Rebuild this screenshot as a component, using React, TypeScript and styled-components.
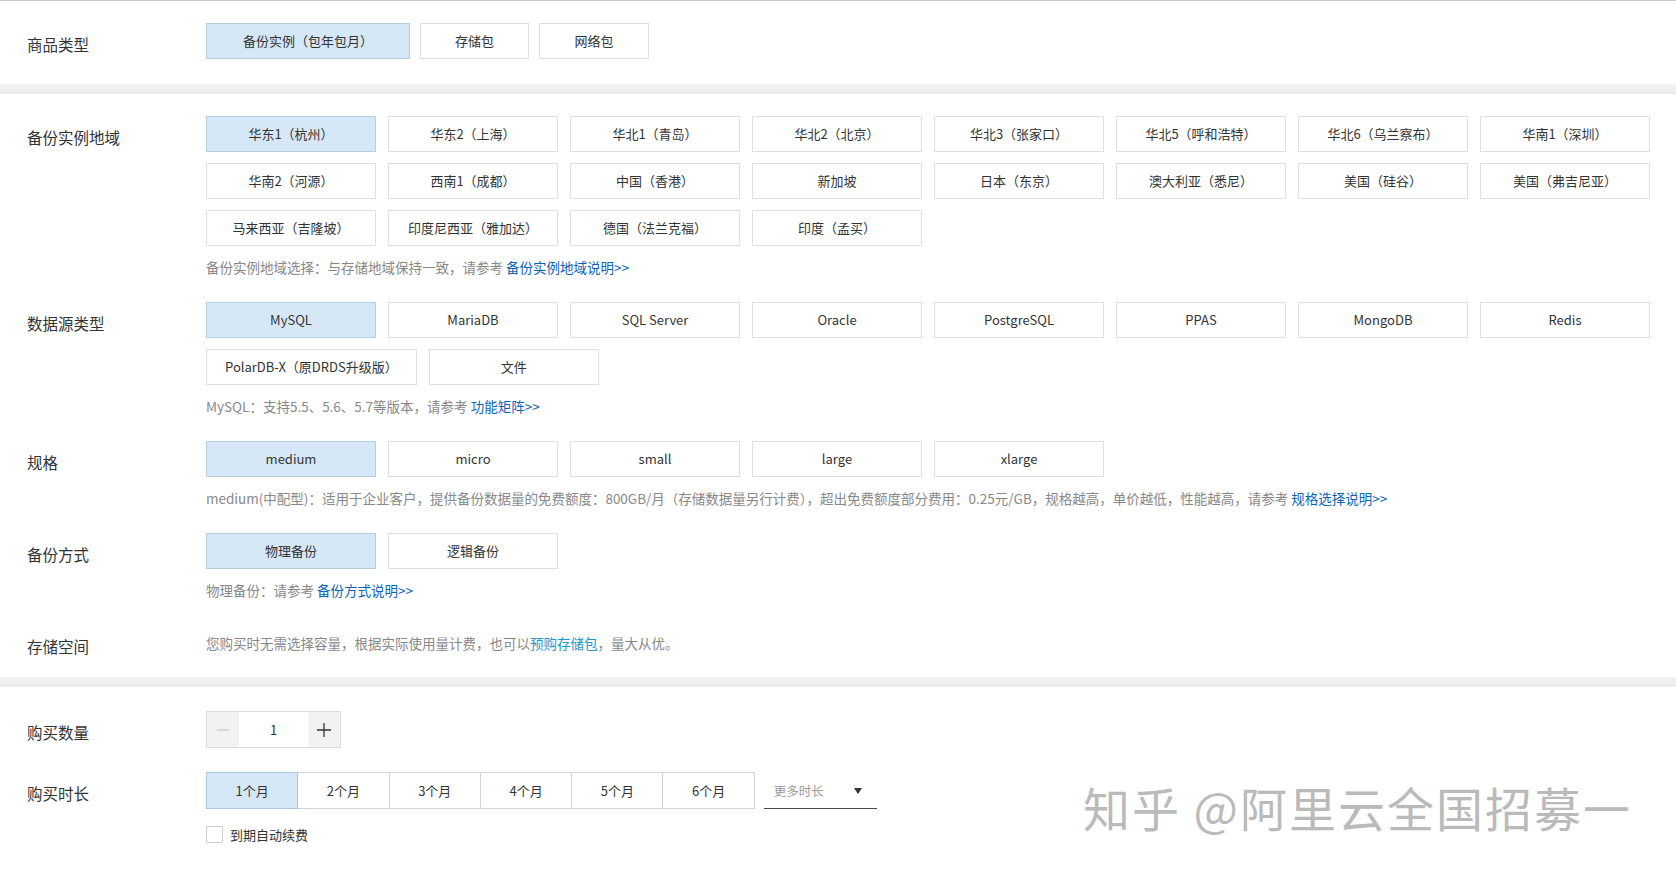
import React from "react";
import styled, { createGlobalStyle, css } from "styled-components";

const GlobalStyle = createGlobalStyle`
  html, body { margin: 0; padding: 0; background: #ffffff; }
  body {
    font-family: "Noto Sans CJK SC", "Noto Sans", "Liberation Sans", sans-serif;
    color: #333333;
  }
  * { box-sizing: border-box; }
`;

const Page = styled.div`
  position: relative;
  width: 1676px;
  min-height: 875px;
  background: #ffffff;
  border-top: 1px solid #c9c9c9;
`;

const Section = styled.section<{ $pt: number; $pb: number; $gap?: number }>`
  display: flex;
  flex-direction: column;
  gap: ${(p) => p.$gap ?? 0}px;
  padding: ${(p) => p.$pt}px 24px ${(p) => p.$pb}px 0;
`;

const Band = styled.div`
  height: 10px;
  background: linear-gradient(#f1f2f4, #e9ebed);
`;

const Field = styled.div`
  display: flex;
  align-items: flex-start;
`;

const Label = styled.div`
  flex: 0 0 206px;
  height: 36px;
  padding-left: 27px;
  padding-top: 6px;
  line-height: 30px;
  font-size: 15.5px;
  color: #333333;
`;

const Content = styled.div`
  flex: 1;
  min-width: 0;
`;

const ChipRow = styled.div<{ $gap?: number }>`
  display: flex;
  flex-wrap: wrap;
  column-gap: ${(p) => p.$gap ?? 12}px;
  row-gap: 11px;
`;

const Chip = styled.button<{ $active?: boolean; $w?: number }>`
  height: 36px;
  ${(p) =>
    p.$w
      ? css`
          width: ${p.$w}px;
          padding: 0;
        `
      : css`
          min-width: 170px;
          padding: 0 18px;
        `}
  border: 1px solid ${(p) => (p.$active ? "#b4cee4" : "#e0e0e0")};
  background: ${(p) => (p.$active ? "#d6e8f7" : "#ffffff")};
  color: #333333;
  font-family: inherit;
  font-size: 13px;
  line-height: 34px;
  text-align: center;
  white-space: nowrap;
  cursor: pointer;
`;

const Hint = styled.div`
  margin-top: 11px;
  line-height: 20px;
  font-size: 13.5px;
  color: #888888;
  white-space: nowrap;
`;

const Link = styled.a<{ $tone?: "dark" | "light" }>`
  color: ${(p) => (p.$tone === "light" ? "#2196c9" : "#0a64b4")};
  text-decoration: none;
`;

const PlainText = styled.div`
  line-height: 36px;
  font-size: 13.5px;
  color: #888888;
  white-space: nowrap;
`;

const Stepper = styled.div`
  display: flex;
  width: 135px;
  height: 37px;
  border: 1px solid #dcdcdc;
`;

const StepButton = styled.button<{ $disabled?: boolean }>`
  flex: 0 0 32px;
  border: none;
  background: #f2f2f2;
  color: ${(p) => (p.$disabled ? "#c8c8c8" : "#333333")};
  display: flex;
  align-items: center;
  justify-content: center;
  padding: 0;
`;

const StepValue = styled.div`
  flex: 1;
  display: flex;
  align-items: center;
  justify-content: center;
  font-size: 13px;
  color: #333333;
`;

const DurationRow = styled.div`
  display: flex;
  align-items: center;
`;

const Segments = styled.div`
  display: flex;
`;

const Segment = styled.button<{ $active?: boolean }>`
  width: 92.3px;
  height: 37px;
  margin-left: -1px;
  border: 1px solid ${(p) => (p.$active ? "#a9c7e2" : "#d4d4d4")};
  background: ${(p) => (p.$active ? "#d6e8f7" : "#ffffff")};
  color: #333333;
  font-family: inherit;
  font-size: 13px;
  position: relative;
  z-index: ${(p) => (p.$active ? 1 : 0)};
  &:first-child { margin-left: 0; }
`;

const Dropdown = styled.div`
  margin-left: 9px;
  width: 113px;
  height: 37px;
  display: flex;
  align-items: center;
  justify-content: space-between;
  padding: 0 15px 0 10px;
  border-bottom: 1px solid #4a4a4a;
  font-size: 12.5px;
  color: #9a9a9a;
`;

const Caret = styled.span`
  width: 0;
  height: 0;
  border-left: 4.5px solid transparent;
  border-right: 4.5px solid transparent;
  border-top: 6px solid #333333;
  margin-top: 1px;
`;

const CheckRow = styled.label`
  display: flex;
  align-items: center;
  gap: 7px;
  margin-top: 17px;
  font-size: 13px;
  color: #333333;
  line-height: 17px;
`;

const CheckBox = styled.span`
  width: 17px;
  height: 17px;
  border: 1px solid #cccccc;
  background: #ffffff;
  border-radius: 1px;
`;

const Watermark = styled.div`
  position: absolute;
  left: 1083px;
  top: 778px;
  font-size: 47px;
  letter-spacing: 2px;
  line-height: 56px;
  color: #bababa;
  white-space: pre;
  pointer-events: none;
`;

const regions = [
  "华东1（杭州）", "华东2（上海）", "华北1（青岛）", "华北2（北京）",
  "华北3（张家口）", "华北5（呼和浩特）", "华北6（乌兰察布）", "华南1（深圳）",
  "华南2（河源）", "西南1（成都）", "中国（香港）", "新加坡",
  "日本（东京）", "澳大利亚（悉尼）", "美国（硅谷）", "美国（弗吉尼亚）",
  "马来西亚（吉隆坡）", "印度尼西亚（雅加达）", "德国（法兰克福）", "印度（孟买）",
];

const dbTypes = [
  "MySQL", "MariaDB", "SQL Server", "Oracle", "PostgreSQL", "PPAS", "MongoDB", "Redis",
  "PolarDB-X（原DRDS升级版）", "文件",
];

const specs = ["medium", "micro", "small", "large", "xlarge"];
const months = ["1个月", "2个月", "3个月", "4个月", "5个月", "6个月"];

const Minus = () => (
  <svg width="14" height="14" viewBox="0 0 14 14">
    <path d="M1 7h12" stroke="currentColor" strokeWidth="1.2" />
  </svg>
);

const Plus = () => (
  <svg width="16" height="16" viewBox="0 0 16 16">
    <path d="M1 8h14M8 1v14" stroke="currentColor" strokeWidth="1.3" />
  </svg>
);

export default function App() {
  return (
    <>
      <GlobalStyle />
      <Page>
        <Section $pt={22} $pb={25}>
          <Field>
            <Label>商品类型</Label>
            <Content>
              <ChipRow $gap={10}>
                <Chip $w={204} $active>备份实例（包年包月）</Chip>
                <Chip $w={109}>存储包</Chip>
                <Chip $w={110}>网络包</Chip>
              </ChipRow>
            </Content>
          </Field>
        </Section>
        <Band />
        <Section $pt={22} $pb={16} $gap={25}>
          <Field>
            <Label>备份实例地域</Label>
            <Content>
              <ChipRow>
                {regions.map((r, i) => (
                  <Chip key={r} $active={i === 0}>{r}</Chip>
                ))}
              </ChipRow>
              <Hint>
                备份实例地域选择：与存储地域保持一致，请参考 <Link>备份实例地域说明&gt;&gt;</Link>
              </Hint>
            </Content>
          </Field>
          <Field>
            <Label>数据源类型</Label>
            <Content>
              <ChipRow>
                {dbTypes.map((d, i) => (
                  <Chip key={d} $active={i === 0}>{d}</Chip>
                ))}
              </ChipRow>
              <Hint>
                MySQL：支持5.5、5.6、5.7等版本，请参考 <Link>功能矩阵&gt;&gt;</Link>
              </Hint>
            </Content>
          </Field>
          <Field>
            <Label>规格</Label>
            <Content>
              <ChipRow>
                {specs.map((s, i) => (
                  <Chip key={s} $active={i === 0}>{s}</Chip>
                ))}
              </ChipRow>
              <Hint>
                medium(中配型)：适用于企业客户，提供备份数据量的免费额度：800GB/月（存储数据量另行计费），超出免费额度部分费用：0.25元/GB，规格越高，单价越低，性能越高，请参考 <Link>规格选择说明&gt;&gt;</Link>
              </Hint>
            </Content>
          </Field>
          <Field>
            <Label>备份方式</Label>
            <Content>
              <ChipRow>
                <Chip $active>物理备份</Chip>
                <Chip>逻辑备份</Chip>
              </ChipRow>
              <Hint>
                物理备份：请参考 <Link>备份方式说明&gt;&gt;</Link>
              </Hint>
            </Content>
          </Field>
          <Field>
            <Label>存储空间</Label>
            <Content>
              <PlainText>
                您购买时无需选择容量，根据实际使用量计费，也可以<Link $tone="light">预购存储包</Link>，量大从优。
              </PlainText>
            </Content>
          </Field>
        </Section>
        <Band />
        <Section $pt={24} $pb={20} $gap={24}>
          <Field>
            <Label>购买数量</Label>
            <Content>
              <Stepper>
                <StepButton $disabled><Minus /></StepButton>
                <StepValue>1</StepValue>
                <StepButton><Plus /></StepButton>
              </Stepper>
            </Content>
          </Field>
          <Field>
            <Label>购买时长</Label>
            <Content>
              <DurationRow>
                <Segments>
                  {months.map((m, i) => (
                    <Segment key={m} $active={i === 0}>{m}</Segment>
                  ))}
                </Segments>
                <Dropdown>
                  <span>更多时长</span>
                  <Caret />
                </Dropdown>
              </DurationRow>
              <CheckRow>
                <CheckBox />
                到期自动续费
              </CheckRow>
            </Content>
          </Field>
        </Section>
        <Watermark>知乎 @阿里云全国招募一</Watermark>
      </Page>
    </>
  );
}
